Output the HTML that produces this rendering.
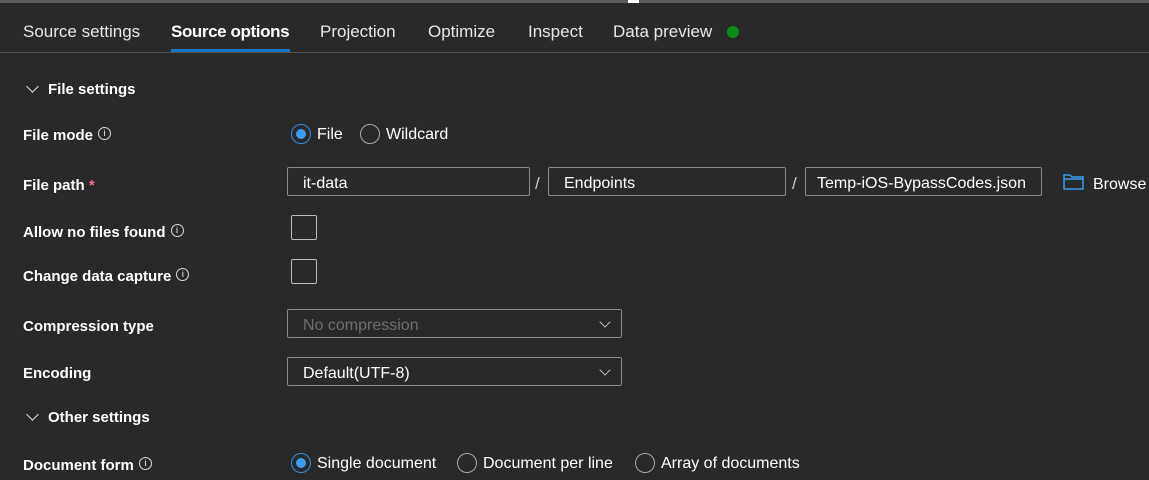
<!DOCTYPE html>
<html><head><style>
body{margin:0;width:1149px;height:480px;background:#292929;overflow:hidden;font-family:"Liberation Sans",sans-serif;color:#fff;position:relative}
.a{position:absolute;white-space:nowrap}
.tab{font-size:17px;top:22px;color:#e8e8e8}
.lbl{font-size:15px;font-weight:bold;left:23px}
.info{display:inline-block;width:11px;height:11px;border:1px solid #ddd;border-radius:50%;font-size:9px;line-height:11px;text-align:center;vertical-align:top;margin-left:5px;font-weight:normal}
.inp{position:absolute;height:29px;border:1px solid #8a8a8a;border-radius:2px;box-sizing:border-box;font-size:16px;line-height:31px;padding-left:15px;color:#fff}
.cb{position:absolute;left:291px;width:26px;height:25px;border:1px solid #bbb;border-radius:2px;box-sizing:border-box}
.rad{position:absolute;width:20px;height:20px;border:1px solid #aaa;border-radius:50%;box-sizing:border-box}
.rad.on{border-color:#2f8fe8}
.rad.on::after{content:"";position:absolute;left:4px;top:4px;width:10px;height:10px;border-radius:50%;background:#3b9cf0}
.rt{font-size:16px}
.chev{position:absolute;right:12px;top:8px;width:7px;height:7px;border-right:1px solid #bbb;border-bottom:1px solid #bbb;transform:rotate(45deg)}
.sec{font-size:15px;font-weight:bold;left:48px}
.sc{position:absolute;left:28px;width:8px;height:8px;border-right:1.5px solid #ddd;border-bottom:1.5px solid #ddd;transform:rotate(45deg)}
</style></head><body>
<div class="a" style="left:0;top:0;width:1149px;height:3px;background:#5b5b5b"></div>
<div class="a" style="left:628px;top:0;width:11px;height:3px;background:#fff"></div>
<div class="a tab" style="left:23px">Source settings</div>
<div class="a tab" style="left:171px;font-weight:bold;color:#fff;letter-spacing:-0.4px">Source options</div>
<div class="a tab" style="left:320px">Projection</div>
<div class="a tab" style="left:428px">Optimize</div>
<div class="a tab" style="left:528px">Inspect</div>
<div class="a tab" style="left:613px">Data preview</div>
<div class="a" style="left:727px;top:26px;width:12px;height:12px;border-radius:50%;background:#0e8a16"></div>
<div class="a" style="left:0;top:52px;width:1149px;height:1px;background:#555"></div>
<div class="a" style="left:171px;top:49px;width:119px;height:3px;background:#1b73c6"></div>

<div class="sc" style="top:82px"></div>
<div class="a sec" style="top:81px">File settings</div>

<div class="a lbl" style="top:127px">File mode<span class="info">i</span></div>
<div class="rad on" style="left:291px;top:124px"></div><div class="a rt" style="left:317px;top:126px">File</div>
<div class="rad" style="left:360px;top:124px"></div><div class="a rt" style="left:386px;top:126px">Wildcard</div>

<div class="a lbl" style="top:177px">File path <span style="color:#f1707b">*</span></div>
<div class="inp" style="left:287px;top:167px;width:243px">it-data</div>
<div class="a" style="left:535px;top:174px;font-size:17px;color:#ccc">/</div>
<div class="inp" style="left:548px;top:167px;width:238px">Endpoints</div>
<div class="a" style="left:792px;top:174px;font-size:17px;color:#ccc">/</div>
<div class="inp" style="left:805px;top:167px;width:237px;padding-left:11px">Temp-iOS-BypassCodes.json</div>
<svg class="a" style="left:1063px;top:174px" width="21" height="16" viewBox="0 0 21 16"><path d="M1 1h6l2 2h11v12H1z M1 5h19" fill="none" stroke="#3b9cf0" stroke-width="1.5"/></svg>
<div class="a rt" style="left:1093px;top:176px">Browse</div>

<div class="a lbl" style="top:224px">Allow no files found<span class="info">i</span></div>
<div class="cb" style="top:215px"></div>
<div class="a lbl" style="top:268px">Change data capture<span class="info">i</span></div>
<div class="cb" style="top:259px"></div>

<div class="a lbl" style="top:318px">Compression type</div>
<div class="inp" style="left:287px;top:309px;width:335px;color:#6e6e6e">No compression<span class="chev"></span></div>
<div class="a lbl" style="top:365px">Encoding</div>
<div class="inp" style="left:287px;top:357px;width:335px">Default(UTF-8)<span class="chev"></span></div>

<div class="sc" style="top:410px"></div>
<div class="a sec" style="top:409px">Other settings</div>

<div class="a lbl" style="top:457px">Document form<span class="info">i</span></div>
<div class="rad on" style="left:291px;top:453px"></div><div class="a rt" style="left:317px;top:455px">Single document</div>
<div class="rad" style="left:457px;top:453px"></div><div class="a rt" style="left:483px;top:455px">Document per line</div>
<div class="rad" style="left:635px;top:453px"></div><div class="a rt" style="left:661px;top:455px">Array of documents</div>
</body></html>
